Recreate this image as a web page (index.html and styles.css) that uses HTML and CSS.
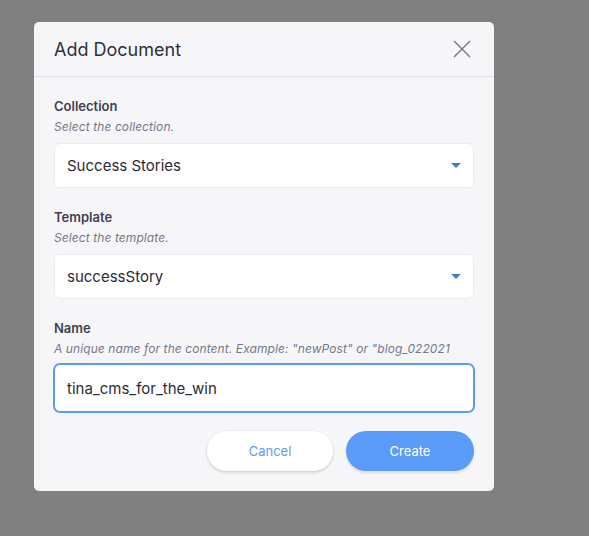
FILE: index.html
```html
<!DOCTYPE html>
<html>
<head>
<meta charset="utf-8">
<link rel="stylesheet" href="styles.css">
</head>
<body>
<div class="modal">
  <div class="modal-header">
    <h1 class="title">Add Document</h1>
    <button class="close" aria-label="Close">
      <svg width="18" height="18" viewBox="0 0 18 18"><path d="M1 1L17 17M17 1L1 17" stroke="#77767f" stroke-width="1.4" fill="none"/></svg>
    </button>
  </div>
  <div class="modal-body">
    <div class="field">
      <div class="label">Collection</div>
      <div class="desc">Select the collection.</div>
      <div class="select"><span>Success Stories</span><span class="caret"></span></div>
    </div>
    <div class="field">
      <div class="label">Template</div>
      <div class="desc">Select the template.</div>
      <div class="select"><span>successStory</span><span class="caret"></span></div>
    </div>
    <div class="field">
      <div class="label">Name</div>
      <div class="desc">A unique name for the content. Example: "newPost" or "blog_022021</div>
      <div class="input">tina_cms_for_the_win</div>
    </div>
  </div>
  <div class="modal-footer">
    <button class="btn btn-cancel">Cancel</button>
    <button class="btn btn-create">Create</button>
  </div>
</div>
</body>
</html>
```
FILE: styles.css
```css
html, body {
  margin: 0;
  padding: 0;
  background: #808080;
  font-family: Inter, "Noto Sans", sans-serif;
}
body {
  width: 589px;
  height: 536px;
  overflow: hidden;
}
.modal {
  margin: 22px 0 0 34px;
  width: 460px;
  height: 469px;
  background: #f6f6f9;
  border-radius: 5px;
  display: flex;
  flex-direction: column;
}
.modal-header {
  height: 55px;
  box-sizing: border-box;
  border-bottom: 1px solid #e1ddec;
  display: flex;
  align-items: center;
  justify-content: space-between;
  padding: 0 23px 0 20px;
}
.title {
  margin: 0;
  font-size: 18px;
  font-weight: 400;
  color: #2f2f3a;
}
.close {
  border: 0;
  background: none;
  padding: 0;
  width: 18px;
  height: 18px;
  display: flex;
}
.modal-body {
  padding: 21px 20px 0;
  display: flex;
  flex-direction: column;
  gap: 21px;
}
.field {
  display: flex;
  flex-direction: column;
}
.label {
  font-size: 13px;
  font-weight: 600;
  line-height: 16px;
  color: #433e52;
}
.desc {
  margin-top: 5px;
  font-size: 12px;
  font-style: italic;
  line-height: 16px;
  letter-spacing: 0.09px;
  color: #77768a;
}
.select {
  margin-top: 8px;
  height: 45px;
  box-sizing: border-box;
  background: #fff;
  border: 1px solid #edecf3;
  border-radius: 6px;
  display: flex;
  align-items: center;
  justify-content: space-between;
  padding: 0 12px 0 12px;
  font-size: 15px;
  color: #2b2b36;
}
.caret {
  width: 0;
  height: 0;
  border-left: 5px solid transparent;
  border-right: 5px solid transparent;
  border-top: 5px solid #3f7fc6;
  margin-right: 0;
}
.input {
  margin-top: 7px;
  height: 48px;
  box-sizing: border-box;
  background: #fff;
  border: 1px solid #5b9bf8;
  box-shadow: 0 0 0 1px #5b9bf8;
  border-radius: 6px;
  display: flex;
  align-items: center;
  padding: 0 12px;
  font-size: 15px;
  color: #2b2b36;
}
.modal-footer {
  margin-top: auto;
  padding: 0 20px 20px;
  display: flex;
  justify-content: flex-end;
  gap: 13px;
}
.btn {
  height: 40px;
  border-radius: 20px;
  border: 0;
  font-family: Inter, "Noto Sans", sans-serif;
  font-size: 13px;
  padding: 0;
  cursor: pointer;
}
.btn-cancel {
  width: 126px;
  background: #fff;
  color: #5b9bf8;
  box-shadow: 0 2px 3px rgba(0, 0, 0, 0.12), 0 0 0 1px rgba(0, 0, 0, 0.03);
}
.btn-create {
  width: 128px;
  background: #5b9bf8;
  color: #fff;
  box-shadow: 0 2px 3px rgba(0, 0, 0, 0.1);
}
```
